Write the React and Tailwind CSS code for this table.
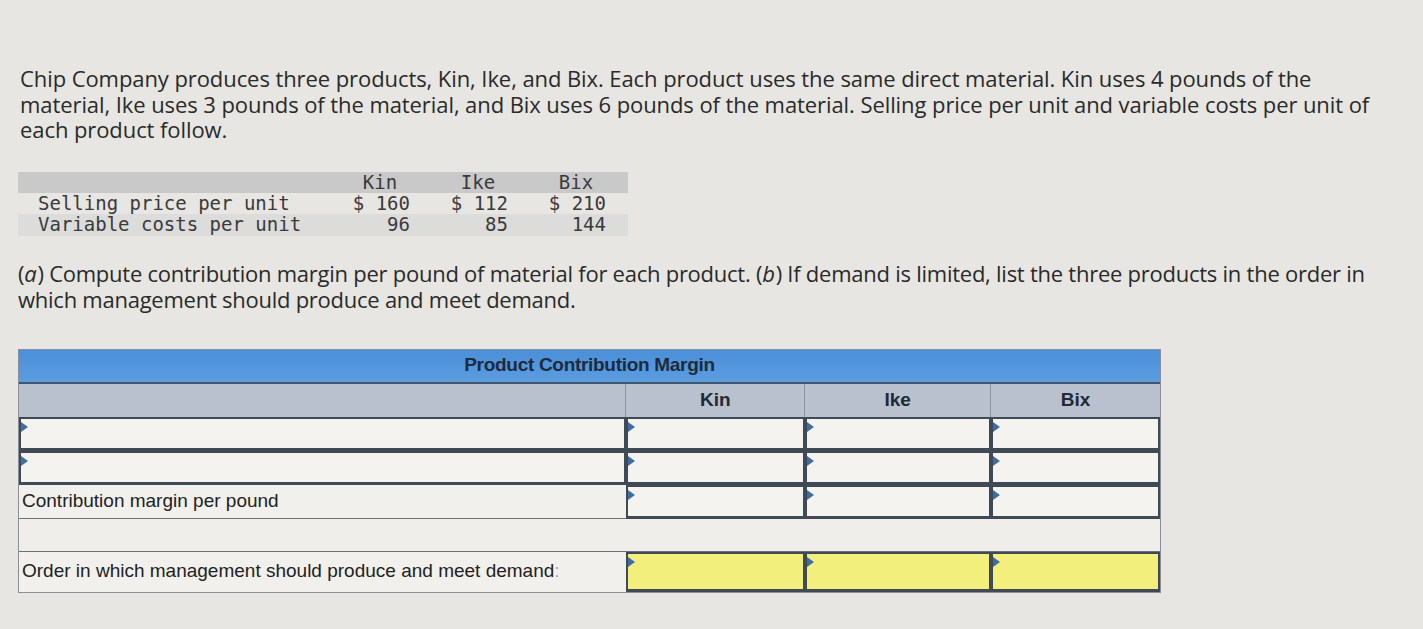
import React from 'react';

const products = [
  { name: 'Kin', price: 160, cost: 96 },
  { name: 'Ike', price: 112, cost: 85 },
  { name: 'Bix', price: 210, cost: 144 },
];

const colWidths = ['w-[179px]', 'w-[186px]', 'w-[169px]'];

function Marker() {
  return (
    <span className="absolute left-0 top-[3px] h-0 w-0 border-y-[5px] border-l-[7px] border-y-transparent border-l-[#3b6ea5]" />
  );
}

function InputCell({ width, yellow }) {
  return (
    <div
      className={`relative h-full ${width} border-2 border-b-[3px] border-[#3f4a55] ${
        yellow ? 'bg-[#f3ef7c]' : 'bg-[#f4f3ef]'
      }`}
    >
      <Marker />
    </div>
  );
}

function DataTable() {
  return (
    <div className="mt-[29px] w-[610px] whitespace-pre font-['DejaVu_Sans_Mono',monospace] text-[19px] leading-[21px] text-[#3a3a3a]">
      <div className="flex h-[21px] items-end bg-[#c9c9c9] pl-[20px]">
        <div className="w-[312px]" />
        {products.map((p, i) => (
          <div key={p.name} className={`w-[60px] text-center ${i > 0 ? 'ml-[38px]' : ''}`}>
            {p.name}
          </div>
        ))}
      </div>
      <div className="flex h-[21px] pl-[20px]">
        <div className="w-[312px]">Selling price per unit</div>
        {products.map((p, i) => (
          <div key={p.name} className={`w-[60px] text-right ${i > 0 ? 'ml-[38px]' : ''}`}>
            $ {p.price}
          </div>
        ))}
      </div>
      <div className="flex h-[22px] bg-[#dcdcda] pl-[20px]">
        <div className="w-[312px]">Variable costs per unit</div>
        {products.map((p, i) => (
          <div key={p.name} className={`w-[60px] text-right ${i > 0 ? 'ml-[38px]' : ''}`}>
            {p.cost}
          </div>
        ))}
      </div>
    </div>
  );
}

function MarginTable() {
  return (
    <div className="mt-[37px] w-[1143px] border border-[#8a9099] font-['Liberation_Sans',Arial,sans-serif] text-[19px] text-[#222]">
      <div className="flex h-[34px] items-center justify-center border-b-2 border-[#3f5670] bg-gradient-to-b from-[#4a8fd8] to-[#5c9de0] font-bold tracking-[-0.3px] text-[#1d2b3c]">
        Product Contribution Margin
      </div>
      <div className="flex h-[33px] bg-[#b8c1cd] font-bold text-[#1f2a36]">
        <div className="w-[608px] border-r border-[#8b95a3]" />
        {products.map((p, i) => (
          <div
            key={p.name}
            className={`flex ${colWidths[i]} items-center justify-center ${i < 2 ? 'border-r border-[#8b95a3]' : ''}`}
          >
            {p.name}
          </div>
        ))}
      </div>
      {[0, 1].map((r) => (
        <div key={r} className="flex h-[34px]">
          <InputCell width="w-[608px]" />
          {colWidths.map((w, i) => (
            <InputCell key={i} width={w} />
          ))}
        </div>
      ))}
      <div className="flex h-[34px]">
        <div className="flex w-[608px] items-center border-b border-[#6d737a] bg-[#f1f0ec] pl-[3px]">
          Contribution margin per pound
        </div>
        {colWidths.map((w, i) => (
          <InputCell key={i} width={w} />
        ))}
      </div>
      <div className="h-[33px] border-b border-[#6d737a] bg-[#efeeea]" />
      <div className="flex h-[40px]">
        <div className="flex w-[608px] items-center bg-[#f1f0ec] pl-[3px]">
          Order in which management should produce and meet demand<span className="text-[#9aa]">:</span>
        </div>
        {colWidths.map((w, i) => (
          <InputCell key={i} width={w} yellow />
        ))}
      </div>
    </div>
  );
}

export default function App() {
  return (
    <div className="min-h-[629px] w-[1423px] bg-[#e7e6e2] pl-[20px] pt-[66px] font-['Open_Sans',sans-serif] text-[#2a2a2a]">
      <p className="w-[1375px] text-[22px] leading-[25.5px] tracking-[-0.08px]">
        Chip Company produces three products, Kin, Ike, and Bix. Each product uses the same direct material. Kin
        uses 4 pounds of the material, Ike uses 3 pounds of the material, and Bix uses 6 pounds of the material.
        Selling price per unit and variable costs per unit of each product follow.
      </p>
      <div className="-ml-[2px]">
        <DataTable />
      </div>
      <p className="-ml-[2px] mt-[24px] w-[1385px] text-[22px] leading-[26px] tracking-[-0.25px]">
        (<i className="pr-[1px]">a</i>) Compute contribution margin per pound of material for each product. (
        <i className="pr-[1px]">b</i>) If demand is limited, list the three products in the order in which
        management should produce and meet demand.
      </p>
      <div className="-ml-[2px]">
        <MarginTable />
      </div>
    </div>
  );
}
